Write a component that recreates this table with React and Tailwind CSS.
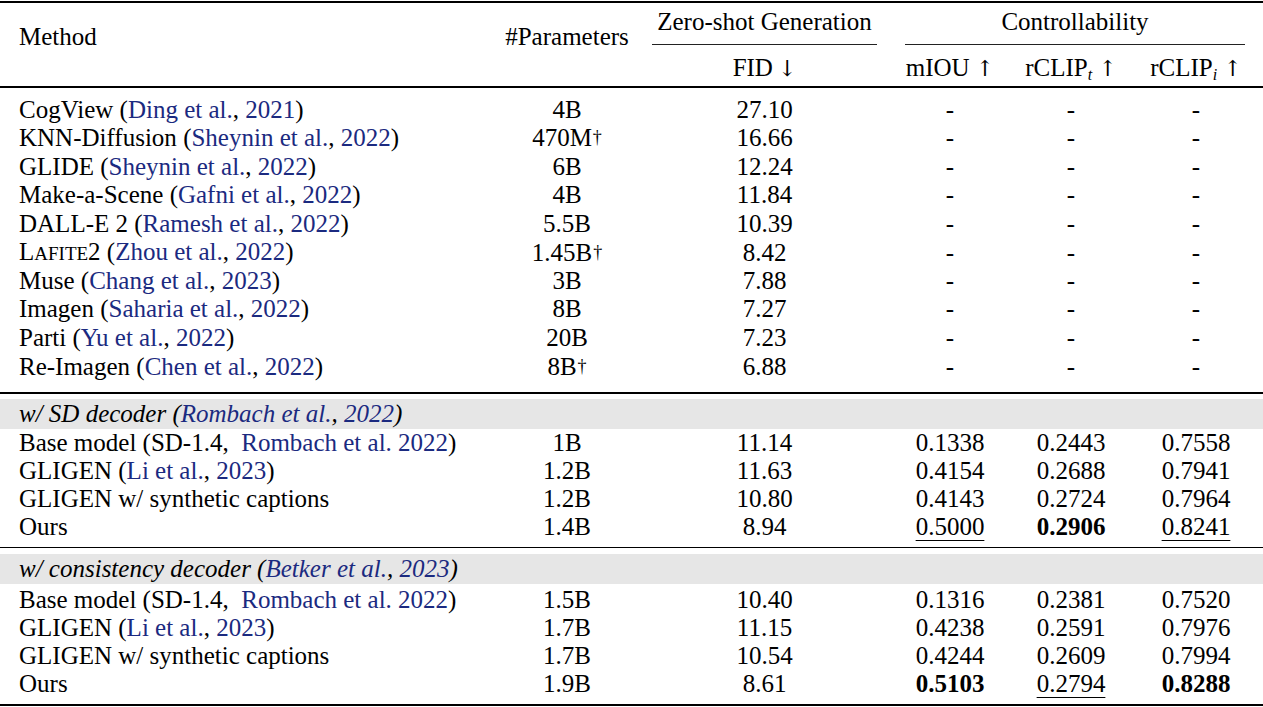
import React from "react";

const COLS = "grid grid-cols-[500px_134px_261px_110px_132px_126px]";

function Cite({ name, year, sep = ", " }) {
  return (
    <>
      (<span className="text-[#1b2a80]">{name}</span>
      {sep}
      <span className="text-[#1b2a80]">{year}</span>)
    </>
  );
}

function Dag() {
  return <sup className="text-[18px] relative -top-[3px] ml-px">†</sup>;
}

function Val({ v }) {
  if (typeof v === "string") return <span>{v}</span>;
  if (v.b) return <span className="font-bold">{v.t}</span>;
  return (
    <span className="underline decoration-1 underline-offset-[5px]">{v.t}</span>
  );
}

function Row({ method, params, fid, a, b, c, h = "h-[28px]" }) {
  return (
    <div className={`${COLS} ${h} items-center`}>
      <div className="pl-[19px] whitespace-nowrap">{method}</div>
      <div className="text-center whitespace-nowrap">{params}</div>
      <div className="text-center">{fid}</div>
      <div className="text-center">
        <Val v={a} />
      </div>
      <div className="text-center">
        <Val v={b} />
      </div>
      <div className="text-center pr-2">
        <Val v={c} />
      </div>
    </div>
  );
}

function Band({ children }) {
  return (
    <div className="h-[30px] bg-[#e6e6e6] flex items-center pl-[19px] italic whitespace-nowrap">
      <span>{children}</span>
    </div>
  );
}

const Arrow = ({ up }) => (
  <span className="font-['DejaVu_Serif',serif] text-[22px]">{up ? "↑" : "↓"}</span>
);

const Lafite = (
  <>
    L<span className="text-[19px]">AFITE</span>2
  </>
);

const group1 = [
  ["CogView", "Ding et al.", "2021", "4B", false, "27.10"],
  ["KNN-Diffusion", "Sheynin et al.", "2022", "470M", true, "16.66"],
  ["GLIDE", "Sheynin et al.", "2022", "6B", false, "12.24"],
  ["Make-a-Scene", "Gafni et al.", "2022", "4B", false, "11.84"],
  ["DALL-E 2", "Ramesh et al.", "2022", "5.5B", false, "10.39"],
  [Lafite, "Zhou et al.", "2022", "1.45B", true, "8.42"],
  ["Muse", "Chang et al.", "2023", "3B", false, "7.88"],
  ["Imagen", "Saharia et al.", "2022", "8B", false, "7.27"],
  ["Parti", "Yu et al.", "2022", "20B", false, "7.23"],
  ["Re-Imagen", "Chen et al.", "2022", "8B", true, "6.88"],
];

const baseModel = (
  <>
    Base model (SD-1.4,&nbsp;&nbsp;
    <span className="text-[#1b2a80]">Rombach et al.</span>{" "}
    <span className="text-[#1b2a80]">2022</span>)
  </>
);
const gligen = (
  <>
    GLIGEN <Cite name="Li et al." year="2023" />
  </>
);

const group2 = [
  [baseModel, "1B", "11.14", "0.1338", "0.2443", "0.7558"],
  [gligen, "1.2B", "11.63", "0.4154", "0.2688", "0.7941"],
  ["GLIGEN w/ synthetic captions", "1.2B", "10.80", "0.4143", "0.2724", "0.7964"],
  ["Ours", "1.4B", "8.94", { t: "0.5000" }, { t: "0.2906", b: true }, { t: "0.8241" }],
];

const group3 = [
  [baseModel, "1.5B", "10.40", "0.1316", "0.2381", "0.7520"],
  [gligen, "1.7B", "11.15", "0.4238", "0.2591", "0.7976"],
  ["GLIGEN w/ synthetic captions", "1.7B", "10.54", "0.4244", "0.2609", "0.7994"],
  ["Ours", "1.9B", "8.61", { t: "0.5103", b: true }, { t: "0.2794" }, { t: "0.8288", b: true }],
];

export default function App() {
  return (
    <div className="w-[1263px] h-[707px] bg-white text-black overflow-hidden font-['Liberation_Serif',serif] text-[25px] leading-[28px] pt-px">
      {/* top rule */}
      <div className="h-[2px] bg-black" />

      {/* header */}
      <div className={`${COLS} grid-rows-[42px_41px]`}>
        <div className="row-span-2 pl-[19px] pt-[20px]">Method</div>
        <div className="row-span-2 text-center pt-[20px]">#Parameters</div>
        <div className="pt-[5px] flex flex-col">
          <div className="text-center h-[28px] whitespace-nowrap">Zero-shot Generation</div>
          <div className="mt-[8px] mx-[18px] h-px bg-[#222]" />
        </div>
        <div className="col-span-3 pt-[5px] flex flex-col">
          <div className="text-center h-[28px] pl-[10px] pr-[18px]">Controllability</div>
          <div className="mt-[8px] ml-[10px] mr-[18px] h-px bg-[#222]" />
        </div>
        <div className="col-start-3 text-center pt-[9px] whitespace-nowrap">
          FID&thinsp;<Arrow />
        </div>
        <div className="text-center pt-[9px] whitespace-nowrap">
          mIOU <Arrow up />
        </div>
        <div className="text-center pt-[9px] whitespace-nowrap">
          rCLIP<sub className="italic text-[16px] leading-none">t</sub> <Arrow up />
        </div>
        <div className="text-center pt-[9px] pr-2 whitespace-nowrap">
          rCLIP<sub className="italic text-[16px] leading-none">i</sub> <Arrow up />
        </div>
      </div>

      <div className="h-[1.5px] bg-black" />

      {/* group 1 */}
      <div className="pt-[8px] pb-[10px]">
        {group1.map(([m, n, y, p, d, f], i) => (
          <Row
            key={i}
            method={
              <>
                {m} <Cite name={n} year={y} />
              </>
            }
            params={
              <>
                {p}
                {d && <Dag />}
              </>
            }
            fid={f}
            a="-"
            b="-"
            c="-"
            h={i === 9 ? "h-[30px]" : "h-[28.5px]"}
          />
        ))}
      </div>

      <div className="h-[1.5px] bg-black" />

      {/* group 2 */}
      <div className="pt-[5px] pb-[6px]">
        <Band>
          w/ SD decoder (<span className="text-[#1b2a80]">Rombach et al.</span>,{" "}
          <span className="text-[#1b2a80]">2022</span>)
        </Band>
        {group2.map(([m, p, f, a, b, c], i) => (
          <Row key={i} method={m} params={p} fid={f} a={a} b={b} c={c} />
        ))}
      </div>

      <div className="h-[1.5px] bg-black" />

      {/* group 3 */}
      <div className="pt-[6px] pb-[6px]">
        <Band>
          w/ consistency decoder (<span className="text-[#1b2a80]">Betker et al.</span>,{" "}
          <span className="text-[#1b2a80]">2023</span>)
        </Band>
        <div className="pt-[2px]">
          {group3.map(([m, p, f, a, b, c], i) => (
            <Row key={i} method={m} params={p} fid={f} a={a} b={b} c={c} />
          ))}
        </div>
      </div>

      <div className="h-[2px] bg-black" />
    </div>
  );
}
